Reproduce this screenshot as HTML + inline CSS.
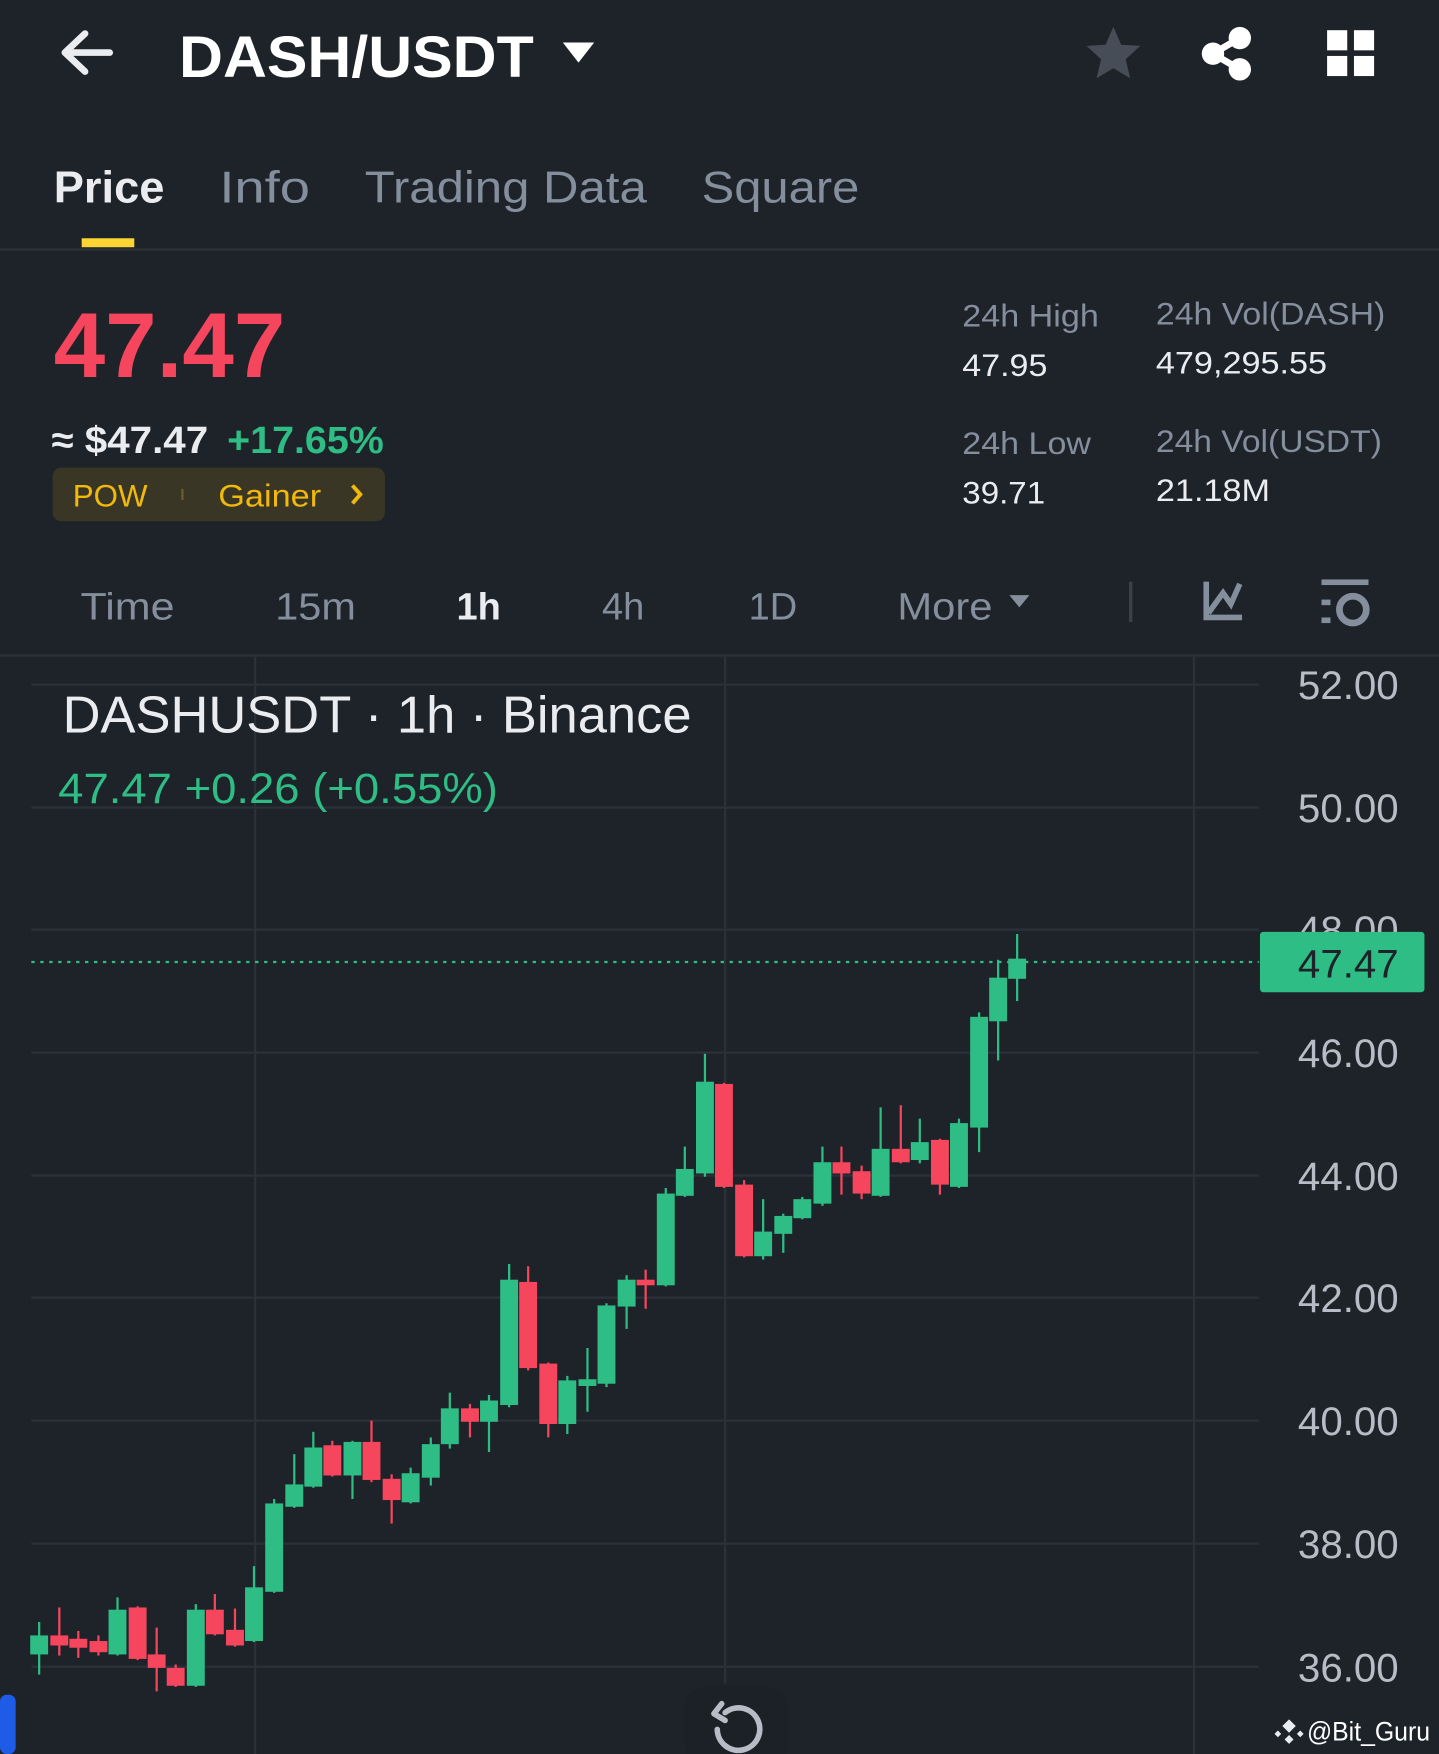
<!DOCTYPE html>
<html><head><meta charset="utf-8"><style>
html,body{margin:0;padding:0;background:#1e2329;}
svg{display:block;}
text{font-family:"Liberation Sans","DejaVu Sans",sans-serif;}
</style></head><body>
<svg width="1439" height="1754" viewBox="0 0 1286 1568" preserveAspectRatio="none" xmlns="http://www.w3.org/2000/svg">
<rect width="1286" height="1568" fill="#1e2329"/>
<!-- header -->
<path d="M98 47H58M76 30L58 47L76 64" stroke="#eaecef" stroke-width="6" fill="none" stroke-linecap="round" stroke-linejoin="round"/>
<text x="160" y="69" font-size="52" font-weight="bold" fill="#fff" textLength="317" lengthAdjust="spacingAndGlyphs">DASH/USDT</text>
<path d="M503 38H531L517 56Z" fill="#fff"/>
<path d="M995 24L1002 40L1019 41L1006 53L1010 70L995 61L980 70L984 53L971 41L988 40Z" fill="#474d57"/>
<g fill="#fff"><circle cx="1108" cy="34" r="10"/><circle cx="1108" cy="62" r="10"/><circle cx="1084" cy="48" r="10"/></g>
<path d="M1108 34L1084 48L1108 62" stroke="#fff" stroke-width="6" fill="none"/>
<g fill="#fff"><rect x="1186" y="27" width="18" height="18"/><rect x="1210" y="27" width="18" height="18"/><rect x="1186" y="50" width="18" height="18"/><rect x="1210" y="50" width="18" height="18"/></g>
<!-- tabs -->
<text x="48" y="181" font-size="40" fill="#eaecef" font-weight="bold" textLength="99" lengthAdjust="spacingAndGlyphs">Price</text>
<text x="196" y="181" font-size="40" fill="#848e9c" textLength="81" lengthAdjust="spacingAndGlyphs">Info</text>
<text x="326" y="181" font-size="40" fill="#848e9c" textLength="252" lengthAdjust="spacingAndGlyphs">Trading Data</text>
<text x="627" y="181" font-size="40" fill="#848e9c" textLength="141" lengthAdjust="spacingAndGlyphs">Square</text>
<rect x="73" y="213" width="47" height="8" fill="#fcd535"/>
<rect x="0" y="222" width="1286" height="2" fill="#2b3139"/>
<!-- price -->
<text x="48" y="337" font-size="82" font-weight="bold" fill="#f6465d" textLength="207" lengthAdjust="spacingAndGlyphs">47.47</text>
<text x="46" y="405" font-size="34" font-weight="bold" fill="#eaecef" textLength="140" lengthAdjust="spacingAndGlyphs">≈ $47.47</text>
<text x="203" y="405" font-size="34" font-weight="bold" fill="#2ebd85" textLength="140" lengthAdjust="spacingAndGlyphs">+17.65%</text>
<rect x="47" y="418" width="297" height="48" rx="8" fill="#3a3626"/>
<text x="65" y="453" font-size="28" fill="#f0b90b">POW</text>
<rect x="162" y="437" width="2" height="10" fill="#6b5d2a"/>
<text x="195" y="453" font-size="28" fill="#f0b90b" textLength="92" lengthAdjust="spacingAndGlyphs">Gainer</text>
<path d="M315 434L322 442L315 450" stroke="#f0b90b" stroke-width="3.5" fill="none"/>
<g font-size="28"><text x="860" y="292" fill="#848e9c" textLength="122" lengthAdjust="spacingAndGlyphs">24h High</text><text x="860" y="336" fill="#eaecef" textLength="76" lengthAdjust="spacingAndGlyphs">47.95</text>
<text x="1033" y="290" fill="#848e9c" textLength="205" lengthAdjust="spacingAndGlyphs">24h Vol(DASH)</text><text x="1033" y="334" fill="#eaecef" textLength="153" lengthAdjust="spacingAndGlyphs">479,295.55</text>
<text x="860" y="406" fill="#848e9c" textLength="115" lengthAdjust="spacingAndGlyphs">24h Low</text><text x="860" y="450" fill="#eaecef" textLength="74" lengthAdjust="spacingAndGlyphs">39.71</text>
<text x="1033" y="404" fill="#848e9c" textLength="202" lengthAdjust="spacingAndGlyphs">24h Vol(USDT)</text><text x="1033" y="448" fill="#eaecef" textLength="102" lengthAdjust="spacingAndGlyphs">21.18M</text></g>
<!-- timeframe -->
<g font-size="34" fill="#848e9c"><text x="72" y="554" textLength="84" lengthAdjust="spacingAndGlyphs">Time</text><text x="246" y="554" textLength="72" lengthAdjust="spacingAndGlyphs">15m</text><text x="408" y="554" fill="#eaecef" font-weight="bold">1h</text><text x="538" y="554">4h</text><text x="669" y="554">1D</text><text x="802" y="554" textLength="85" lengthAdjust="spacingAndGlyphs">More</text></g>
<path d="M902 532H920L911 543Z" fill="#848e9c"/>
<rect x="1009" y="520" width="3" height="36" fill="#3a414b"/>
<path d="M1078 520V552H1110M1080 548L1093 530L1100 540L1108 522" stroke="#848e9c" stroke-width="5" fill="none"/>
<g fill="#848e9c"><rect x="1181" y="518" width="42" height="5"/><rect x="1181" y="536" width="8" height="5"/><rect x="1181" y="552" width="8" height="5"/></g>
<circle cx="1209" cy="545" r="12" stroke="#848e9c" stroke-width="6" fill="none"/>
<rect x="0" y="585" width="1286" height="2" fill="#2b3139"/>
<!-- grid -->
<g stroke="#2b3139" stroke-width="2">
<line x1="28" y1="612" x2="1125" y2="612"/><line x1="28" y1="722" x2="1125" y2="722"/><line x1="28" y1="831" x2="1125" y2="831"/><line x1="28" y1="941" x2="1125" y2="941"/><line x1="28" y1="1051" x2="1125" y2="1051"/><line x1="28" y1="1160" x2="1125" y2="1160"/><line x1="28" y1="1270" x2="1125" y2="1270"/><line x1="28" y1="1380" x2="1125" y2="1380"/><line x1="28" y1="1490" x2="1125" y2="1490"/>
<line x1="228" y1="587" x2="228" y2="1568"/><line x1="648" y1="587" x2="648" y2="1505"/><line x1="1067" y1="587" x2="1067" y2="1568"/>
</g>
<g font-size="36" fill="#b7bdc6" text-anchor="end">
<text x="1250" y="625">52.00</text><text x="1250" y="735">50.00</text><text x="1250" y="844">48.00</text><text x="1250" y="954">46.00</text><text x="1250" y="1064">44.00</text><text x="1250" y="1173">42.00</text><text x="1250" y="1283">40.00</text><text x="1250" y="1393">38.00</text><text x="1250" y="1503">36.00</text>
</g>
<text x="56" y="655" font-size="46" fill="#eaecef" textLength="562" lengthAdjust="spacingAndGlyphs">DASHUSDT · 1h · Binance</text>
<text x="52" y="718" font-size="38" fill="#2ebd85" textLength="393" lengthAdjust="spacingAndGlyphs">47.47  +0.26 (+0.55%)</text>
<line x1="28" y1="860" x2="1125" y2="860" stroke="#2ebd85" stroke-width="2" stroke-dasharray="3 5"/>
<rect x="1126" y="833" width="147" height="54" rx="3" fill="#2ebd85"/>
<text x="1250" y="874" font-size="36" fill="#1e2329" text-anchor="end">47.47</text>
<!-- candles green -->
<g fill="#2ebd85" stroke="#2ebd85" stroke-width="2">
<line x1="35" y1="1450" x2="35" y2="1497"/><rect x="28" y="1463" width="14" height="15"/>
<line x1="105" y1="1428" x2="105" y2="1480"/><rect x="98" y="1440" width="14" height="38"/>
<line x1="175" y1="1434" x2="175" y2="1508"/><rect x="168" y="1440" width="14" height="66"/>
<line x1="227" y1="1400" x2="227" y2="1468"/><rect x="220" y="1420" width="14" height="46"/>
<line x1="245" y1="1340" x2="245" y2="1424"/><rect x="238" y="1345" width="14" height="77"/>
<line x1="263" y1="1300" x2="263" y2="1348"/><rect x="256" y="1328" width="14" height="18"/>
<line x1="280" y1="1280" x2="280" y2="1330"/><rect x="273" y="1295" width="14" height="33"/>
<line x1="315" y1="1288" x2="315" y2="1340"/><rect x="308" y="1290" width="14" height="28"/>
<line x1="367" y1="1312" x2="367" y2="1344"/><rect x="360" y="1318" width="14" height="24"/>
<line x1="385" y1="1285" x2="385" y2="1328"/><rect x="378" y="1292" width="14" height="28"/>
<line x1="402" y1="1245" x2="402" y2="1295"/><rect x="395" y="1260" width="14" height="30"/>
<line x1="437" y1="1247" x2="437" y2="1298"/><rect x="430" y="1253" width="14" height="17"/>
<line x1="455" y1="1130" x2="455" y2="1258"/><rect x="448" y="1145" width="14" height="110"/>
<line x1="507" y1="1230" x2="507" y2="1282"/><rect x="500" y="1235" width="14" height="37"/>
<line x1="525" y1="1205" x2="525" y2="1262"/><rect x="518" y="1234" width="14" height="4"/>
<line x1="542" y1="1165" x2="542" y2="1240"/><rect x="535" y="1168" width="14" height="68"/>
<line x1="560" y1="1140" x2="560" y2="1188"/><rect x="553" y="1145" width="14" height="22"/>
<line x1="595" y1="1062" x2="595" y2="1150"/><rect x="588" y="1068" width="14" height="80"/>
<line x1="612" y1="1025" x2="612" y2="1070"/><rect x="605" y="1046" width="14" height="22"/>
<line x1="630" y1="942" x2="630" y2="1052"/><rect x="623" y="968" width="14" height="80"/>
<line x1="682" y1="1072" x2="682" y2="1126"/><rect x="675" y="1102" width="14" height="20"/>
<line x1="700" y1="1085" x2="700" y2="1120"/><rect x="693" y="1088" width="14" height="14"/>
<line x1="717" y1="1070" x2="717" y2="1090"/><rect x="710" y="1073" width="14" height="15"/>
<line x1="735" y1="1025" x2="735" y2="1078"/><rect x="728" y="1040" width="14" height="35"/>
<line x1="787" y1="990" x2="787" y2="1070"/><rect x="780" y="1028" width="14" height="40"/>
<line x1="822" y1="1000" x2="822" y2="1040"/><rect x="815" y="1022" width="14" height="14"/>
<line x1="857" y1="1000" x2="857" y2="1062"/><rect x="850" y="1005" width="14" height="55"/>
<line x1="875" y1="905" x2="875" y2="1030"/><rect x="868" y="910" width="14" height="97"/>
<line x1="892" y1="858" x2="892" y2="948"/><rect x="885" y="875" width="14" height="37"/>
<line x1="909" y1="835" x2="909" y2="895"/><rect x="902" y="858" width="14" height="16"/>
</g>
<g fill="#f6465d" stroke="#f6465d" stroke-width="2">
<line x1="53" y1="1437" x2="53" y2="1480"/><rect x="46" y="1463" width="14" height="7"/>
<line x1="70" y1="1458" x2="70" y2="1482"/><rect x="63" y="1466" width="14" height="6"/>
<line x1="88" y1="1462" x2="88" y2="1480"/><rect x="81" y="1468" width="14" height="8"/>
<line x1="123" y1="1436" x2="123" y2="1484"/><rect x="116" y="1438" width="14" height="44"/>
<line x1="140" y1="1455" x2="140" y2="1512"/><rect x="133" y="1480" width="14" height="10"/>
<line x1="157" y1="1488" x2="157" y2="1508"/><rect x="150" y="1492" width="14" height="14"/>
<line x1="192" y1="1425" x2="192" y2="1462"/><rect x="185" y="1440" width="14" height="20"/>
<line x1="210" y1="1438" x2="210" y2="1472"/><rect x="203" y="1458" width="14" height="12"/>
<line x1="297" y1="1288" x2="297" y2="1320"/><rect x="290" y="1293" width="14" height="25"/>
<line x1="332" y1="1270" x2="332" y2="1325"/><rect x="325" y="1290" width="14" height="32"/>
<line x1="350" y1="1318" x2="350" y2="1362"/><rect x="343" y="1323" width="14" height="17"/>
<line x1="420" y1="1255" x2="420" y2="1285"/><rect x="413" y="1260" width="14" height="10"/>
<line x1="472" y1="1132" x2="472" y2="1225"/><rect x="465" y="1147" width="14" height="75"/>
<line x1="490" y1="1218" x2="490" y2="1285"/><rect x="483" y="1220" width="14" height="52"/>
<line x1="577" y1="1135" x2="577" y2="1170"/><rect x="570" y="1145" width="14" height="3"/>
<line x1="647" y1="968" x2="647" y2="1062"/><rect x="640" y="970" width="14" height="90"/>
<line x1="665" y1="1055" x2="665" y2="1124"/><rect x="658" y="1060" width="14" height="62"/>
<line x1="752" y1="1025" x2="752" y2="1068"/><rect x="745" y="1040" width="14" height="8"/>
<line x1="770" y1="1042" x2="770" y2="1072"/><rect x="763" y="1048" width="14" height="18"/>
<line x1="805" y1="988" x2="805" y2="1040"/><rect x="798" y="1028" width="14" height="10"/>
<line x1="840" y1="1018" x2="840" y2="1068"/><rect x="833" y="1020" width="14" height="38"/>
</g>
<!-- bottom -->
<rect x="612" y="1508" width="92" height="70" rx="18" fill="#1c2127"/>
<path d="M648 1531A19 19 0 1 1 641 1546M645 1523L638 1532L648 1538" stroke="#b7bdc6" stroke-width="5" fill="none" stroke-linecap="round" stroke-linejoin="round"/>
<rect x="0" y="1515" width="14" height="53" rx="6" fill="#1e5be6"/>
<path d="M1152 1537l6 6-6 6-6-6z M1142 1547l3 3-3 3-3-3z M1162 1547l3 3-3 3-3-3z M1152 1551l4 4-4 4-4-4z" fill="#eaecef"/>
<text x="1168" y="1556" font-size="24" fill="#fff" textLength="110" lengthAdjust="spacingAndGlyphs">@Bit_Guru</text>
</svg>
</body></html>
